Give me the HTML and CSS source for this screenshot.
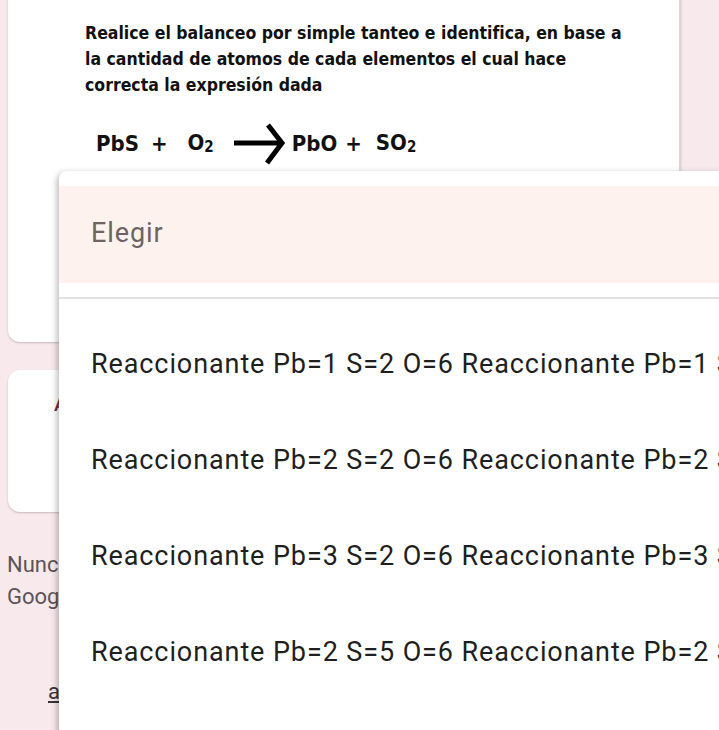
FILE: index.html
```html
<!DOCTYPE html>
<html lang="es">
<head>
<meta charset="utf-8">
<link rel="stylesheet" href="styles.css">
</head>
<body>
<div class="page">
  <div class="card card-question">
    <p class="statement">Realice el balanceo por simple tanteo e identifica, en base a<br>la cantidad de atomos de cada elementos el cual hace<br>correcta la expresión dada</p>
    <div class="equation">
      <span class="chem">PbS</span><span class="plus">+</span><span class="chem o2">O<sub>2</sub></span>
      <svg class="arrow" width="54" height="44" viewBox="0 0 54 44"><path d="M2 21 H48" stroke="#000" stroke-width="5" fill="none"/><path d="M36 3 L50 21 L35 41" stroke="#000" stroke-width="5" fill="none" stroke-linejoin="miter" stroke-linecap="butt"/></svg>
      <span class="chem">PbO</span><span class="plus small">+</span><span class="chem">SO<sub>2</sub></span>
    </div>
  </div>
  <div class="card card-nav">
    <span class="nav-btn">Atrás</span>
  </div>
  <p class="footer-note">Nunca envíes contraseñas a través de Formularios de<br>Google.</p>
  <p class="footer-links"><a class="link" href="#">abuso</a></p>
</div>

<div class="dropdown">
  <div class="dd-head">Elegir</div>
  <div class="dd-divider"></div>
  <ul class="dd-options">
    <li>Reaccionante Pb=1 S=2 O=6 Reaccionante Pb=1 S=2 O=6</li>
    <li>Reaccionante Pb=2 S=2 O=6 Reaccionante Pb=2 S=2 O=6</li>
    <li>Reaccionante Pb=3 S=2 O=6 Reaccionante Pb=3 S=3 O=6</li>
    <li>Reaccionante Pb=2 S=5 O=6 Reaccionante Pb=2 S=5 O=6</li>
  </ul>
</div>
</body>
</html>
```

FILE: styles.css
```css
html, body {
  margin: 0;
  padding: 0;
}
body {
  background: #f8e9ed;
  width: 719px;
  height: 730px;
  overflow: hidden;
  position: relative;
  font-family: Roboto, "Noto Sans", sans-serif;
}
.page {
  display: flex;
  flex-direction: column;
}
.card {
  background: #fff;
  border-radius: 12px;
  margin-left: 8px;
  box-shadow: 0 1px 2px rgba(60, 40, 50, 0.25);
}
.card-question {
  margin-top: -12px;
  width: 673px;
  height: 354px;
  box-sizing: border-box;
  padding: 32px 0 0 77px;
  border-right: 2px solid #ddd3d6;
}
.statement {
  margin: 0;
  font-family: "Liberation Sans Narrow", "DejaVu Sans Condensed", sans-serif;
  font-weight: 700;
  font-size: 17.5px;
  line-height: 26px;
  color: #111;
}
.equation {
  margin-top: 28px;
  margin-left: 11px;
  display: flex;
  align-items: center;
  height: 34px;
  font-family: "Liberation Sans Narrow", "DejaVu Sans Condensed", sans-serif;
  font-weight: 700;
  font-size: 22px;
  color: #111;
}
.chem sub {
  font-size: 15px;
  vertical-align: -2px;
}
.plus {
  margin: 0 10px 0 12px;
}
.plus.small {
  margin: 0 14px 0 8px;
}
.o2 {
  margin-left: 10px;
}
.arrow {
  margin: 2px 6px 0 18px;
}
.card-nav {
  margin-top: 28px;
  height: 142px;
  width: 673px;
  box-sizing: border-box;
  padding: 24px 0 0 46px;
}
.nav-btn {
  color: #7b2748;
  font-size: 19px;
  line-height: 22px;
  font-weight: 500;
}
.footer-note {
  margin: 37px 0 0 7px;
  font-size: 22px;
  line-height: 32px;
  color: #5c5357;
}
.footer-links {
  margin: 63px 0 0 48px;
  font-size: 22px;
  line-height: 32px;
}
.link {
  color: #3c3437;
  text-decoration: underline;
}
.dropdown {
  position: absolute;
  top: 171px;
  left: 59px;
  width: 700px;
  height: 620px;
  background: #fff;
  border-radius: 8px 0 0 0;
  box-shadow: -2px 2px 6px rgba(0, 0, 0, 0.28);
  padding-top: 15px;
  box-sizing: border-box;
}
.dd-head {
  height: 97px;
  background: #fdf2ee;
  display: flex;
  align-items: center;
  padding-left: 32px;
  padding-bottom: 4px;
  box-sizing: border-box;
  font-size: 27px;
  letter-spacing: 0.9px;
  color: #6e6363;
}
.dd-divider {
  margin-top: 14px;
  height: 2px;
  background: #e2e0e0;
}
.dd-options {
  list-style: none;
  margin: 16px 0 0 0;
  padding: 0;
}
.dd-options li {
  height: 96px;
  line-height: 98px;
  padding-left: 32px;
  font-size: 27px;
  letter-spacing: 0.9px;
  color: #1f1f1f;
  white-space: nowrap;
  overflow: hidden;
}
```
